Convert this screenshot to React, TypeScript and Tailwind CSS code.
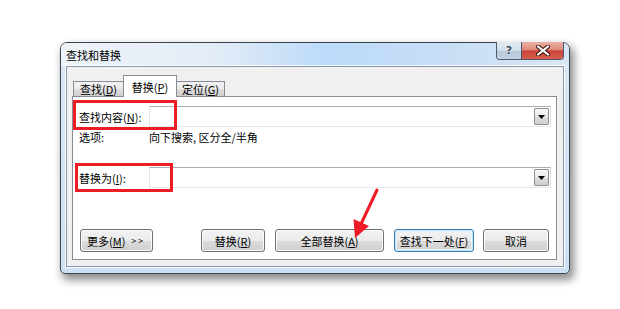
import React from "react";

const U = ({ c }: { c: string }) => <span className="underline underline-offset-[1px] decoration-1">{c}</span>;

function DropBtn() {
  return (
    <div className="w-[15px] h-[17px] border border-[#8e8f8f] rounded-[1px] bg-[linear-gradient(180deg,#f6f6f6_0%,#e9e9e9_50%,#dcdcdc_51%,#d0d0d0_100%)] flex items-center justify-center">
      <svg width="7" height="4" viewBox="0 0 7 4">
        <polygon points="0,0 7,0 3.5,4" fill="#000" />
      </svg>
    </div>
  );
}

function Combo() {
  return (
    <div className="flex-1 h-[21px] border border-t-[#abadb3] border-l-[#e2e3ea] border-r-[#dbdfe6] border-b-[#e3e9ef] bg-white flex items-center justify-end pr-[1px]">
      <DropBtn />
    </div>
  );
}

function Btn({ w, ml, children, focus, left }: { w: string; ml: string; children: React.ReactNode; focus?: boolean; left?: boolean }) {
  return (
    <div
      className={
        "h-[23px] rounded-[3px] border flex items-center leading-[14px] bg-[linear-gradient(180deg,#f2f2f2_0%,#ebebeb_50%,#dddddd_51%,#cfcfcf_100%)] " +
        w + " " + ml + " " +
        (left ? "justify-start pl-[6px] " : "justify-center ") +
        (focus
          ? "border-[#3c7fb1] shadow-[inset_0_0_0_1px_#bfe4f8,inset_0_0_0_2px_#e6f4fc]"
          : "border-[#707070] shadow-[inset_0_0_0_1px_#fbfbfb]")
      }
    >
      {children}
    </div>
  );
}

export default function App() {
  return (
    <div className="relative w-[620px] h-[309px] bg-white overflow-hidden pl-[60px] pt-[42px] text-[11px] text-black [font-family:'Noto_Sans_CJK_SC','Microsoft_YaHei',sans-serif]">
      {/* window */}
      <div className="flex flex-col w-[510px] h-[232px] rounded-t-[7px] rounded-b-[5px] border border-[#3a4350] bg-[linear-gradient(180deg,#dbe8f5_0%,#cfe1f4_100%)] shadow-[3px_5px_9px_1px_rgba(0,0,0,0.45)]">
        {/* title bar */}
        <div className="flex h-[23px] items-start justify-between pl-[5px] pr-[5px] rounded-t-[6px] bg-[linear-gradient(90deg,#eef3f9_0%,#e3ecf6_30%,#bcdaf9_52%,#c7def6_75%,#d8e6f4_100%)]">
          <span className="mt-[5px] leading-[14px]">查找和替换</span>
          <div className="flex -mt-[1px] border border-t-0 border-[#4d5a6b] rounded-b-[4px] overflow-hidden">
            <div className="w-[25px] h-[17px] border-r border-[#4d5a6b] bg-[linear-gradient(180deg,#e3ebf4_0%,#d2deea_50%,#b6c7d9_51%,#c3d2e2_100%)] flex items-center justify-center text-[11px] font-bold leading-none text-[#3e4a58] [font-family:'DejaVu_Sans',sans-serif] [text-shadow:0_0_1px_#fff,0_0_1px_#fff]">
              ?
            </div>
            <div className="w-[41px] h-[17px] bg-[linear-gradient(180deg,#eab0a4_0%,#dd8d7e_45%,#c8453a_52%,#d65c4d_100%)] flex items-center justify-center">
              <svg width="14" height="11" viewBox="0 0 14 11">
                <path d="M2 1.5 L12 9.5 M12 1.5 L2 9.5" stroke="#4a1a14" strokeWidth="4.2" strokeLinecap="round" />
                <path d="M2 1.5 L12 9.5 M12 1.5 L2 9.5" stroke="#fff" strokeWidth="2.2" strokeLinecap="round" />
              </svg>
            </div>
          </div>
        </div>

        {/* client */}
        <div className="flex-1 mx-[5px] mb-[6px] border border-[#8799ad] shadow-[0_0_0_1px_rgba(255,255,255,0.85)] bg-[#f0f0f0] pt-[8px] pl-[5px] pr-[6px] pb-[6px] flex flex-col">
          {/* tabs */}
          <div className="relative z-10 flex items-end h-[21px] pl-[1px] leading-[14px]">
            <div className="w-[50px] h-[15px] border border-r-0 border-b-0 border-[#898c95] bg-[linear-gradient(180deg,#f2f2f2_0%,#ebebeb_50%,#dddddd_51%,#cfcfcf_100%)] flex items-center justify-center">
              查找(<U c="D" />)
            </div>
            <div className="w-[54px] h-[22px] -mb-[1px] border border-b-0 border-[#898c95] bg-white flex items-center justify-center pt-[1px]">
              替换(<U c="P" />)
            </div>
            <div className="w-[48px] h-[15px] border border-l-0 border-b-0 border-[#898c95] bg-[linear-gradient(180deg,#f2f2f2_0%,#ebebeb_50%,#dddddd_51%,#cfcfcf_100%)] flex items-center justify-center">
              定位(<U c="G" />)
            </div>
          </div>

          {/* panel */}
          <div className="flex-1 border border-[#898c95] bg-white flex flex-col pt-[9px] pl-[6px] pr-[5px] leading-[14px]">
            <div className="flex items-center h-[21px]">
              <span className="w-[70px] shrink-0">查找内容(<U c="N" />):</span>
              <Combo />
            </div>
            <div className="flex items-center h-[18px] mt-[1px]">
              <span className="w-[70px] shrink-0">选项:</span>
              <span>向下搜索, 区分全/半角</span>
            </div>
            <div className="flex items-center h-[21px] mt-[21px]">
              <span className="w-[70px] shrink-0">替换为(<U c="I" />):</span>
              <Combo />
            </div>
            <div className="flex h-[23px] mt-[41px]">
              <Btn w="w-[73px]" ml="ml-[1px]" left>
                更多(<U c="M" />)<span className="ml-[6px] text-[9px] tracking-[2px]">&gt;&gt;</span>
              </Btn>
              <Btn w="w-[64px]" ml="ml-[48px]">
                替换(<U c="R" />)
              </Btn>
              <Btn w="w-[109px]" ml="ml-[10px]">
                全部替换(<U c="A" />)
              </Btn>
              <Btn w="w-[80px]" ml="ml-[10px]" focus>
                查找下一处(<U c="F" />)
              </Btn>
              <Btn w="w-[66px]" ml="ml-[9px]">
                取消
              </Btn>
            </div>
          </div>
        </div>
      </div>

      {/* red annotation boxes */}
      <div className="absolute left-[73px] top-[100px] w-[104px] h-[30px] border-[3px] border-[#ee1c25]" />
      <div className="absolute left-[75px] top-[163px] w-[98px] h-[29px] border-[3px] border-[#ee1c25]" />

      {/* red arrow */}
      <svg className="absolute left-0 top-0 pointer-events-none" width="620" height="309" viewBox="0 0 620 309">
        <line x1="377" y1="190" x2="361" y2="224" stroke="#ee1c25" strokeWidth="3" strokeLinecap="round" />
        <polygon points="355,238 353.5,219 369,226" fill="#ee1c25" />
      </svg>
    </div>
  );
}
